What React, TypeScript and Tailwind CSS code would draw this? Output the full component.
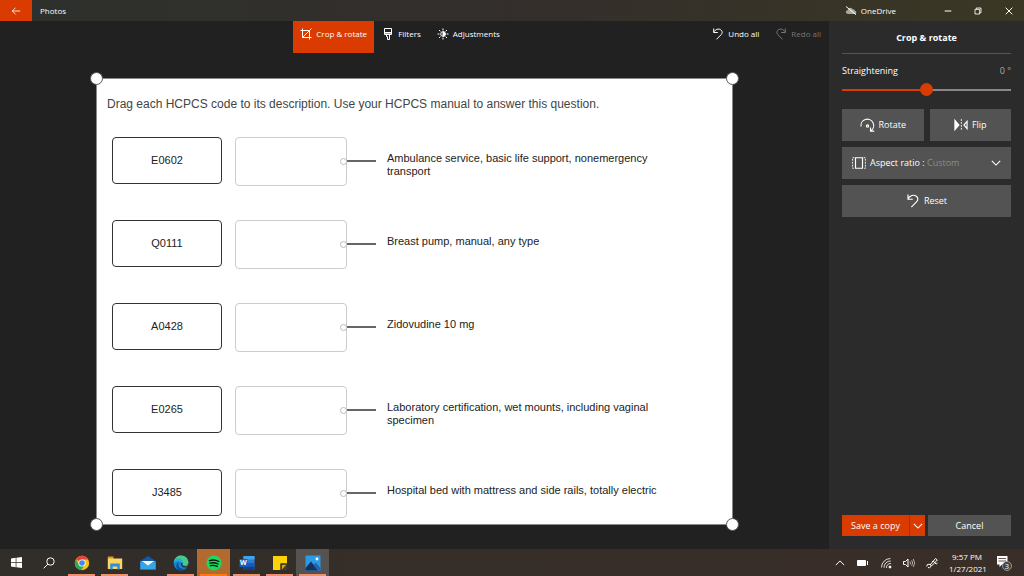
import React from 'react';
import clsx from 'clsx';

const QUESTION = 'Drag each HCPCS code to its description. Use your HCPCS manual to answer this question.';

const ROWS = [
  { code: 'E0602', description: 'Ambulance service, basic life support, nonemergency transport' },
  { code: 'Q0111', description: 'Breast pump, manual, any type' },
  { code: 'A0428', description: 'Zidovudine 10 mg' },
  { code: 'E0265', description: 'Laboratory certification, wet mounts, including vaginal specimen' },
  { code: 'J3485', description: 'Hospital bed with mattress and side rails, totally electric' },
];

type IconProps = { className?: string; children?: React.ReactNode; size?: number };

function Line({ className, children, size = 12 }: IconProps) {
  return (
    <svg width={size} height={size} viewBox="0 0 12 12" fill="none" stroke="currentColor" strokeWidth="1" className={clsx('shrink-0', className)} aria-hidden="true">
      {children}
    </svg>
  );
}

const CropIcon = () => (
  <Line>
    <path d="M0.5 2.5H9.5V11.5M2.5 0.5V9.5H11.5M2.5 9.5L11.5 0.5" />
  </Line>
);

const FilterIcon = () => (
  <Line>
    <path d="M2.5 0.5H9.5V6.5H2.5ZM2.5 4.5H9.5M4.5 6.5V8.5H5.5V11.5H7.5V6.5" />
    <path d="M3 5H9V6.5H3Z" fill="currentColor" stroke="none" opacity="0.6" />
  </Line>
);

const AdjustIcon = () => (
  <Line>
    <circle cx="6" cy="6" r="2.3" />
    <path d="M6 3.7A2.3 2.3 0 0 1 6 8.3Z" fill="currentColor" />
    <path d="M6 0.5V2.4M6 9.6V11.5M0.5 6H2.4M9.6 6H11.5M2 2L3.4 3.4M8.6 8.6L10 10M10 2L8.6 3.4M3.4 8.6L2 10" />
  </Line>
);

const UndoIcon = ({ className, size }: IconProps) => (
  <Line className={className} size={size}>
    <path d="M1.7 0.5V4.5H5.8M1.7 4.2C3.4 1.2 6.6 0.4 8.6 1.7C10.8 3.2 10.4 5.4 9 6.8L4.6 11.3" strokeWidth="1" />
  </Line>
);

const RotateIcon = () => (
  <Line size={15}>
    <path d="M0.8 6.8A5.1 5.1 0 1 1 8.8 10.2M8.4 7.6V10.5H11.4" strokeWidth="0.9" />
    <circle cx="6" cy="6.3" r="0.9" />
  </Line>
);

const FlipIcon = () => (
  <Line size={14}>
    <path d="M0.8 2L4.2 6L0.8 10Z" fill="currentColor" />
    <path d="M11.2 2.8L8.5 6L11.2 9.2Z" />
    <path d="M6.3 1V11" strokeDasharray="1.5 1" strokeWidth="0.8" />
  </Line>
);

const AspectIcon = () => (
  <Line size={14}>
    <path d="M3 1.5H9V10.5H3Z" />
    <path d="M2 1.5H0.5V10.5H2M10 1.5H11.5V10.5H10" strokeDasharray="1.5 1" strokeWidth="0.8" />
  </Line>
);

const ChevronIcon = ({ className }: IconProps) => (
  <Line size={10} className={className}>
    <path d="M1 3.5L6 8.5L11 3.5" strokeWidth="1.3" />
  </Line>
);

function TitleBar() {
  return (
    <header className="flex h-[21px] items-stretch bg-linear-to-r from-[#2d302c] via-[#332e2b] to-[#3b3724] text-[8px]">
      <button aria-label="Back" className="flex w-8 items-center justify-center bg-[#da3b01]">
        <Line size={10}>
          <path d="M11 6H1.5M5.5 2L1.5 6L5.5 10" />
        </Line>
      </button>
      <span className="flex items-center pl-2">Photos</span>
      <div className="ml-auto flex items-center gap-1 pr-9">
        <svg width="12" height="9" viewBox="0 0 12 9" aria-hidden="true">
          <path d="M3 8Q0.6 7.8 0.8 5.8Q1.2 4.3 2.6 4.3Q3 1.8 5.2 1.8Q7 1.7 7.8 3.3Q9.6 3.1 10 4.8Q11.6 5.2 11.3 6.8Q11 8 9.8 8Z" fill="#a9a9a0" />
          <path d="M1 0.5L11 8.7" stroke="#fff" strokeWidth="1" />
        </svg>
        <span>OneDrive</span>
      </div>
      <div className="flex items-center">
        <button aria-label="Minimize" className="flex w-[31px] justify-center">
          <Line size={8}><path d="M1 6H11" strokeWidth="1.5" /></Line>
        </button>
        <button aria-label="Restore" className="flex w-[30px] justify-center">
          <Line size={8}><path d="M1.5 3.5H8.5V10.5H1.5ZM3.5 3.5V1.5H10.5V8.5H8.5" strokeWidth="1.3" /></Line>
        </button>
        <button aria-label="Close" className="flex w-[31px] justify-center">
          <Line size={8}><path d="M1 1L11 11M11 1L1 11" strokeWidth="1.5" /></Line>
        </button>
      </div>
    </header>
  );
}

function Toolbar() {
  const tool = 'flex items-start gap-1 pt-[7px] leading-3';
  return (
    <nav className="flex h-8 items-stretch text-[8px]">
      <div className="flex-1" />
      <div className="flex pr-7">
        <button className={clsx(tool, 'w-[81px] justify-center bg-[#da3b01]')}>
          <CropIcon />
          Crop &amp; rotate
        </button>
        <button className={clsx(tool, 'pl-2')}>
          <FilterIcon />
          Filters
        </button>
        <button className={clsx(tool, 'pl-4')}>
          <AdjustIcon />
          Adjustments
        </button>
      </div>
      <div className="flex flex-1 justify-end gap-4 pr-2">
        <button className={tool}>
          <UndoIcon />
          Undo all
        </button>
        <button disabled className={clsx(tool, 'text-[#777]')}>
          <UndoIcon className="-scale-x-100" />
          Redo all
        </button>
      </div>
    </nav>
  );
}

function MatchRow({ code, description }: { code: string; description: string }) {
  return (
    <li className="flex h-[49px] items-start">
      <button className="h-[47px] w-[110px] shrink-0 rounded-sm border border-[#333] text-center">{code}</button>
      <div className="ml-[13px] flex h-[49px] w-[112px] shrink-0 items-center justify-end rounded-sm border border-[#ccc]">
        <span className="-mr-px size-[7px] shrink-0 rounded-full border border-[#bbb] bg-white" />
      </div>
      <span className="mt-[23px] h-[2px] w-[29px] shrink-0 bg-[#666]" />
      <p className="ml-[11px] max-w-[290px] pt-[15px] leading-[13px]">{description}</p>
    </li>
  );
}

function Handle({ className }: { className: string }) {
  return <span className={clsx('absolute size-[13px] rounded-full border border-[#555] bg-white', className)} />;
}

function Photo() {
  return (
    <section className="relative mx-[96px] mb-6 mt-[25px] flex-1 border border-[#8a8a8a] bg-white pl-[10px] pt-[17px] font-['Liberation_Sans',sans-serif] text-[11px] text-[#222]">
      <h1 className="text-[12px] leading-4 text-[#444]">{QUESTION}</h1>
      <ul className="mt-[25px] flex flex-col gap-[34px] pl-[5px]">
        {ROWS.map((row) => (
          <MatchRow key={row.code} {...row} />
        ))}
      </ul>
      <Handle className="-left-[7px] -top-[7px]" />
      <Handle className="-right-[7px] -top-[7px]" />
      <Handle className="-bottom-[7px] -left-[7px]" />
      <Handle className="-bottom-[7px] -right-[7px]" />
    </section>
  );
}

function SidePanel() {
  const panelButton = 'flex h-8 items-center justify-center gap-1 bg-[#535353]';
  return (
    <aside className="flex w-[195px] shrink-0 flex-col bg-[#2b2b2b] px-[13px] pb-[13px] text-[9px]">
      <h2 className="border-b border-[#555] pb-[9px] pt-[11px] text-center font-bold leading-3">Crop &amp; rotate</h2>
      <div className="mt-[11px] flex justify-between leading-3">
        <label htmlFor="straighten">Straightening</label>
        <span className="text-[#aaa]">0 °</span>
      </div>
      <input
        id="straighten"
        type="range"
        min={-45}
        max={45}
        defaultValue={0}
        className="mt-[6px] h-[13px] w-full appearance-none bg-[linear-gradient(90deg,#da3b01_50%,#888_50%)] bg-[length:100%_2px] bg-center bg-no-repeat [&::-webkit-slider-thumb]:size-[13px] [&::-webkit-slider-thumb]:appearance-none [&::-webkit-slider-thumb]:rounded-full [&::-webkit-slider-thumb]:bg-[#da3b01]"
      />
      <div className="mt-[13px] grid grid-cols-2 gap-[6px]">
        <button className={panelButton}>
          <RotateIcon />
          Rotate
        </button>
        <button className={panelButton}>
          <FlipIcon />
          Flip
        </button>
        <button className="col-span-2 flex h-8 items-center gap-1 bg-[#535353] px-[10px]">
          <AspectIcon />
          <span>Aspect ratio : <span className="text-[#8c8c8c]">Custom</span></span>
          <ChevronIcon className="ml-auto" />
        </button>
        <button className={clsx(panelButton, 'col-span-2')}>
          <UndoIcon size={14} />
          Reset
        </button>
      </div>
      <div className="mt-auto grid grid-cols-2 gap-[3px]">
        <div className="flex h-[21px] bg-[#da3b01]">
          <button className="flex-1">Save a copy</button>
          <button aria-label="More save options" className="flex w-4 items-center justify-center border-l border-[#a83210]">
            <ChevronIcon />
          </button>
        </div>
        <button className="h-[21px] bg-[#535353]">Cancel</button>
      </div>
    </aside>
  );
}

const RUNNING = 'border-[#f0906c]';

const APPS = [
  {
    name: 'Chrome',
    tile: 'bg-transparent',
    bar: RUNNING,
    art: (
      <>
        <circle cx="8" cy="8" r="7.2" fill="#fbc116" />
        <path d="M8 8L1.8 4.3A7.2 7.2 0 0 1 14.3 4.5L8 4.5Z" fill="#e5453a" />
        <path d="M1.8 4.3A7.2 7.2 0 0 0 7.4 15.2L10.8 9.6L5 9.6Z" fill="#34a853" />
        <circle cx="8" cy="8" r="3.6" fill="#fff" />
        <circle cx="8" cy="8" r="2.8" fill="#4285f4" />
      </>
    ),
  },
  {
    name: 'File Explorer',
    tile: 'bg-transparent',
    bar: RUNNING,
    art: (
      <>
        <path d="M0.8 1.5H6.5V4H0.8Z" fill="#e09a1c" />
        <path d="M0.8 3.5H15.2V14H0.8Z" fill="#fcd462" />
        <path d="M3.2 14.5V8.5H12.8V14.5H10.3V11.6H5.7V14.5Z" fill="#2f8fd8" />
      </>
    ),
  },
  {
    name: 'Mail',
    tile: 'bg-transparent',
    bar: 'border-transparent',
    art: (
      <>
        <path d="M0.3 6L8 1L15.7 6V14.5H0.3Z" fill="#0f5ba8" />
        <path d="M0.3 6L8 10.8L15.7 6V14.5H0.3Z" fill="#32a8ea" />
        <path d="M1.5 6H14.5L8 10.8Z" fill="#eef6fc" />
      </>
    ),
  },
  {
    name: 'Edge',
    tile: 'bg-transparent',
    bar: RUNNING,
    art: (
      <>
        <circle cx="8" cy="8" r="7.4" fill="#1683d8" />
        <path d="M1 6.5C2 2.5 5 0.6 8 0.6C12.5 0.6 15.4 4 15.4 7.2C15.4 9.8 13 11 10.8 10.6C9 10.2 9.6 9.2 9.8 8C9.9 6.2 8 4.8 5.8 4.8C3.5 4.8 1.8 5.5 1 6.5Z" fill="#45c98c" />
        <path d="M0.7 8C1 4 4.3 3 6.6 3.6C9.4 4.4 10.4 7 9.7 8.3C7.5 5.7 3.4 5.6 0.7 8Z" fill="#28a9dc" />
        <path d="M5.8 7.2C3.6 10.8 7.3 15 12.8 13.6C10.8 15.6 7.8 15.8 5.2 14.8C2.5 12.8 3 8.3 5.8 7.2Z" fill="#0c4f94" />
        <path d="M9.7 8.1C8.4 10.5 11.5 12.3 15 10.7L14.2 12.3C9.8 13.6 7.2 10.5 8.2 8Z" fill="#332e2b" />
      </>
    ),
  },
  {
    name: 'Spotify',
    tile: 'bg-[#b4692f]',
    bar: 'border-[#ff7a14]',
    art: (
      <>
        <circle cx="8" cy="8" r="7.6" fill="#1ed760" />
        <path d="M3.5 5.6Q8.5 4.2 12.8 6.5M4 8.2Q8.3 7 12 9M4.4 10.6Q8 9.8 11.2 11.4" stroke="#111" strokeWidth="1.4" strokeLinecap="round" fill="none" />
      </>
    ),
  },
  {
    name: 'Word',
    tile: 'bg-transparent',
    bar: RUNNING,
    art: (
      <>
        <path d="M4.5 1H15.5V15H4.5Z" fill="#2b7cd3" />
        <path d="M4.5 1H15.5V4.5H4.5Z" fill="#41a5ee" />
        <path d="M4.5 8H15.5V11.5H4.5Z" fill="#185abd" />
        <path d="M4.5 11.5H15.5V15H4.5Z" fill="#103f91" />
        <path d="M0.5 4H8.5V12H0.5Z" fill="#185abd" />
        <text x="4.5" y="10.4" fontSize="7" fontWeight="700" textAnchor="middle" fill="#fff">W</text>
      </>
    ),
  },
  {
    name: 'Sticky Notes',
    tile: 'bg-transparent',
    bar: RUNNING,
    art: (
      <>
        <path d="M1 1H15V15H1Z" fill="#fdd20a" />
        <path d="M8.5 8.5H15V15H8.5Z" fill="#3a3a3a" />
        <path d="M8.5 15V8.5H15Z" fill="#2b2b2b" />
        <path d="M9.8 14.5V9.8H14.5Z" fill="#d9a404" />
      </>
    ),
  },
  {
    name: 'Photos',
    tile: 'bg-[#56524f]',
    bar: RUNNING,
    art: (
      <>
        <path d="M0.5 0.5H15.5V15.5H0.5Z" fill="#2b9be6" />
        <path d="M0.5 13L6 6.5L13 15.5H0.5Z" fill="#14315f" />
        <path d="M8.5 9.8L11 7.8L15.5 13V15.5H13Z" fill="#2466ad" />
        <circle cx="12" cy="4" r="1.4" fill="#fff" />
      </>
    ),
  },
];

function Taskbar() {
  return (
    <footer className="flex h-[27px] items-stretch bg-linear-to-r from-[#312d29] to-[#3a2e28] text-[8px]">
      <button aria-label="Start" className="flex w-8 items-center justify-center">
        <svg width="11" height="11" viewBox="0 0 11 11" fill="#fff" aria-hidden="true">
          <path d="M0 1.5L4.7 0.8V5.1H0ZM5.4 0.7L11 0V5.1H5.4ZM0 5.8H4.7V10.2L0 9.5ZM5.4 5.8H11V11L5.4 10.3Z" />
        </svg>
      </button>
      <button aria-label="Search" className="flex w-[33px] items-center justify-center">
        <Line>
          <circle cx="7.5" cy="4.5" r="3.7" />
          <path d="M4.8 7.2L0.7 11.3" />
        </Line>
      </button>
      {APPS.map((app) => (
        <button key={app.name} aria-label={app.name} className={clsx('flex w-[33px] justify-center', app.tile)}>
          <span className={clsx('flex h-full w-[27px] items-center justify-center border-b-2 pt-[2px]', app.bar)}>
            <svg width="16" height="16" viewBox="0 0 16 16" aria-hidden="true">{app.art}</svg>
          </span>
        </button>
      ))}
      <div className="ml-auto flex items-center gap-[11px] pr-3">
        <Line size={10}><path d="M1 8.5L6 3.5L11 8.5" strokeWidth="1.2" /></Line>
        <svg width="13" height="12" viewBox="0 0 13 12" aria-hidden="true">
          <path d="M1.5 3.5H9.5V8.5H1.5Z" fill="#fff" stroke="#fff" />
          <path d="M11.5 4V8" stroke="#fff" />
        </svg>
        <Line>
          <path d="M1.5 10.5A9 9 0 0 1 10.5 1.5M4 10.8A6.5 6.5 0 0 1 10.8 4M6.5 11A4 4 0 0 1 11 6.5" opacity="0.8" />
          <circle cx="10" cy="10" r="1" fill="currentColor" />
        </Line>
        <Line>
          <path d="M0.5 4.5H2.5L5 2V10L2.5 7.5H0.5Z" />
          <path d="M7 4.5Q8 6 7 7.5M8.7 3.2Q10.5 6 8.7 8.8M10.3 2Q13 6 10.3 10" opacity="0.6" />
        </Line>
        <Line>
          <path d="M0.8 9.5Q0.5 7 3 7.2Q6 7.5 5 9.5Q3.5 11.5 2 10.5M4 8L9.5 1.5L11.3 3L5.5 9M6 4.5Q8 3.5 9 6Q10 8 11.5 6" />
        </Line>
        <time className="w-9 text-center leading-3">
          9:57 PM
          <br />
          1/27/2021
        </time>
        <button aria-label="Notifications, 3 new">
          <svg width="16" height="16" viewBox="0 0 16 16" aria-hidden="true">
            <path d="M1 1H11.5V9.5H6L3.5 12V9.5H1Z" fill="#fff" />
            <path d="M2.5 3.5H10M2.5 6H10" stroke="#3a2e28" strokeWidth="0.8" />
            <circle cx="11" cy="11" r="4.5" fill="#444" stroke="#aaa" strokeWidth="0.8" />
            <text x="11" y="13.6" fontSize="7.5" textAnchor="middle" fill="#fff">3</text>
          </svg>
        </button>
      </div>
    </footer>
  );
}

export default function App() {
  return (
    <div className="flex min-h-screen flex-col bg-[#212121] font-['Open_Sans','Noto_Sans',sans-serif] text-white">
      <TitleBar />
      <div className="flex flex-1">
        <main className="flex min-w-0 flex-1 flex-col">
          <Toolbar />
          <Photo />
        </main>
        <SidePanel />
      </div>
      <Taskbar />
    </div>
  );
}
